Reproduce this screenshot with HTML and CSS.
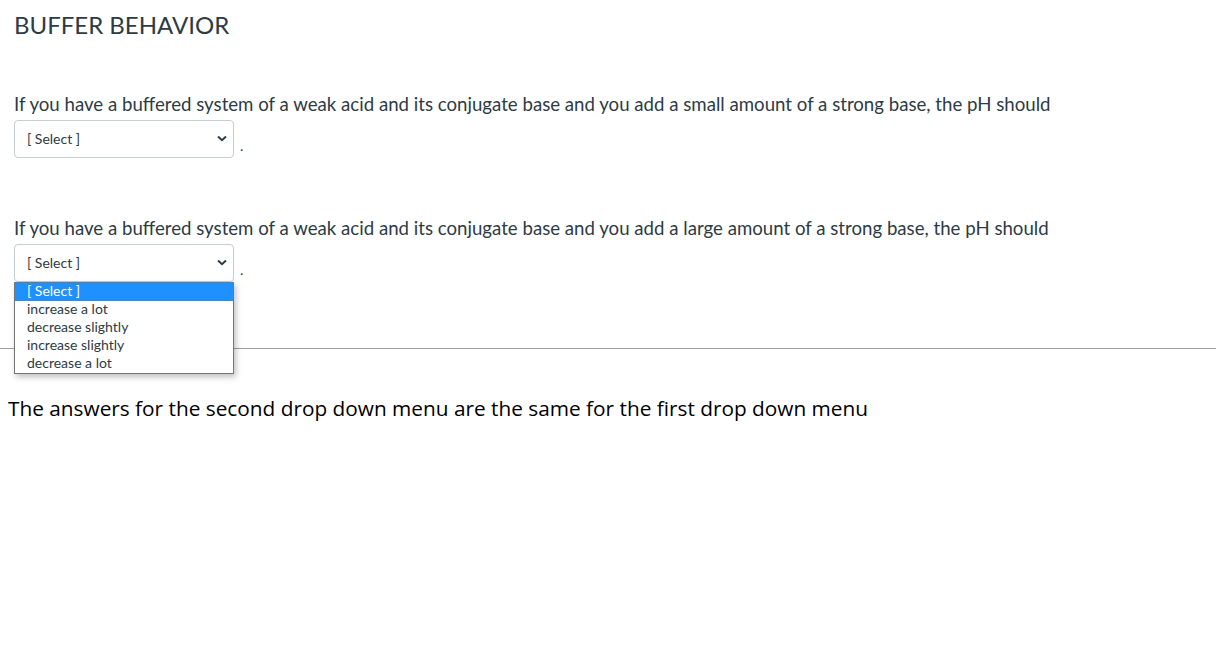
FILE: index.html
```html
<!DOCTYPE html>
<html lang="en">
<head>
    <meta charset="UTF-8">
    <title>Buffer Behavior</title>
    <link rel="stylesheet" href="styles.css">
</head>
<body>
    <div class="quiz">
        <h2 class="quiz-title">BUFFER BEHAVIOR</h2>

        <div class="question">
            <p class="question-text">If you have a buffered system of a weak acid and its conjugate base and you add a small amount of a strong base, the pH should</p>
            <div class="answer">
                <div class="select">
                    <span>[ Select ]</span>
                    <svg class="chevron" width="10" height="7" viewBox="0 0 10 7"><path d="M1 1.5 L5 5.2 L9 1.5" fill="none" stroke="#2d3b45" stroke-width="2"/></svg>
                </div>
                <span class="dot">.</span>
            </div>
        </div>

        <div class="question">
            <p class="question-text">If you have a buffered system of a weak acid and its conjugate base and you add a large amount of a strong base, the pH should</p>
            <div class="answer">
                <div class="select open">
                    <span>[ Select ]</span>
                    <svg class="chevron" width="10" height="7" viewBox="0 0 10 7"><path d="M1 1.5 L5 5.2 L9 1.5" fill="none" stroke="#2d3b45" stroke-width="2"/></svg>
                    <ul class="options">
                        <li class="selected">[ Select ]</li>
                        <li>increase a lot</li>
                        <li>decrease slightly</li>
                        <li>increase slightly</li>
                        <li>decrease a lot</li>
                    </ul>
                </div>
                <span class="dot">.</span>
            </div>
        </div>
    </div>

    <hr class="divider">

    <p class="note">The answers for the second drop down menu are the same for the first drop down menu</p>
</body>
</html>
```

FILE: styles.css
```css
body {
    margin: 0;
    background: #fff;
    font-family: Lato, "Liberation Sans", sans-serif;
    color: #2d3b45;
}

.quiz {
    padding: 0 14px;
}

.quiz-title {
    margin: 0;
    padding-top: 10px;
    font-size: 24px;
    font-weight: 400;
    line-height: 30px;
}

.question {
    margin-top: 52px;
}

.question + .question {
    margin-top: 58px;
}

.question-text {
    margin: 0 0 4px;
    font-size: 18.65px;
    line-height: 24px;
}

.answer {
    display: flex;
    align-items: flex-end;
}

.select {
    position: relative;
    box-sizing: border-box;
    width: 220px;
    height: 38px;
    border: 1px solid #c7cdd1;
    border-radius: 4px;
    padding: 0 6px 2px 12px;
    display: flex;
    align-items: center;
    justify-content: space-between;
    font-size: 14px;
}

.chevron {
    display: block;
}

.dot {
    margin-left: 6px;
    margin-bottom: 4px;
    font-size: 14px;
}

.options {
    position: absolute;
    top: 37px;
    left: -1px;
    width: 220px;
    box-sizing: border-box;
    margin: 0;
    padding: 0;
    list-style: none;
    background: #fff;
    border: 1px solid #767676;
    box-shadow: 2px 3px 6px rgba(0, 0, 0, 0.25);
    font-size: 14px;
    z-index: 2;
}

.options li {
    padding: 0 0 2px 12px;
    line-height: 16px;
}

.options li.selected {
    background: #1e90ff;
    color: #fff;
}

.divider {
    margin: 66px 0 0;
    border: 0;
    border-top: 1px solid #a0a0a0;
}

.note {
    margin: 45px 0 0 8px;
    font-family: "Open Sans", sans-serif;
    font-size: 20.8px;
    color: #000;
}
```
